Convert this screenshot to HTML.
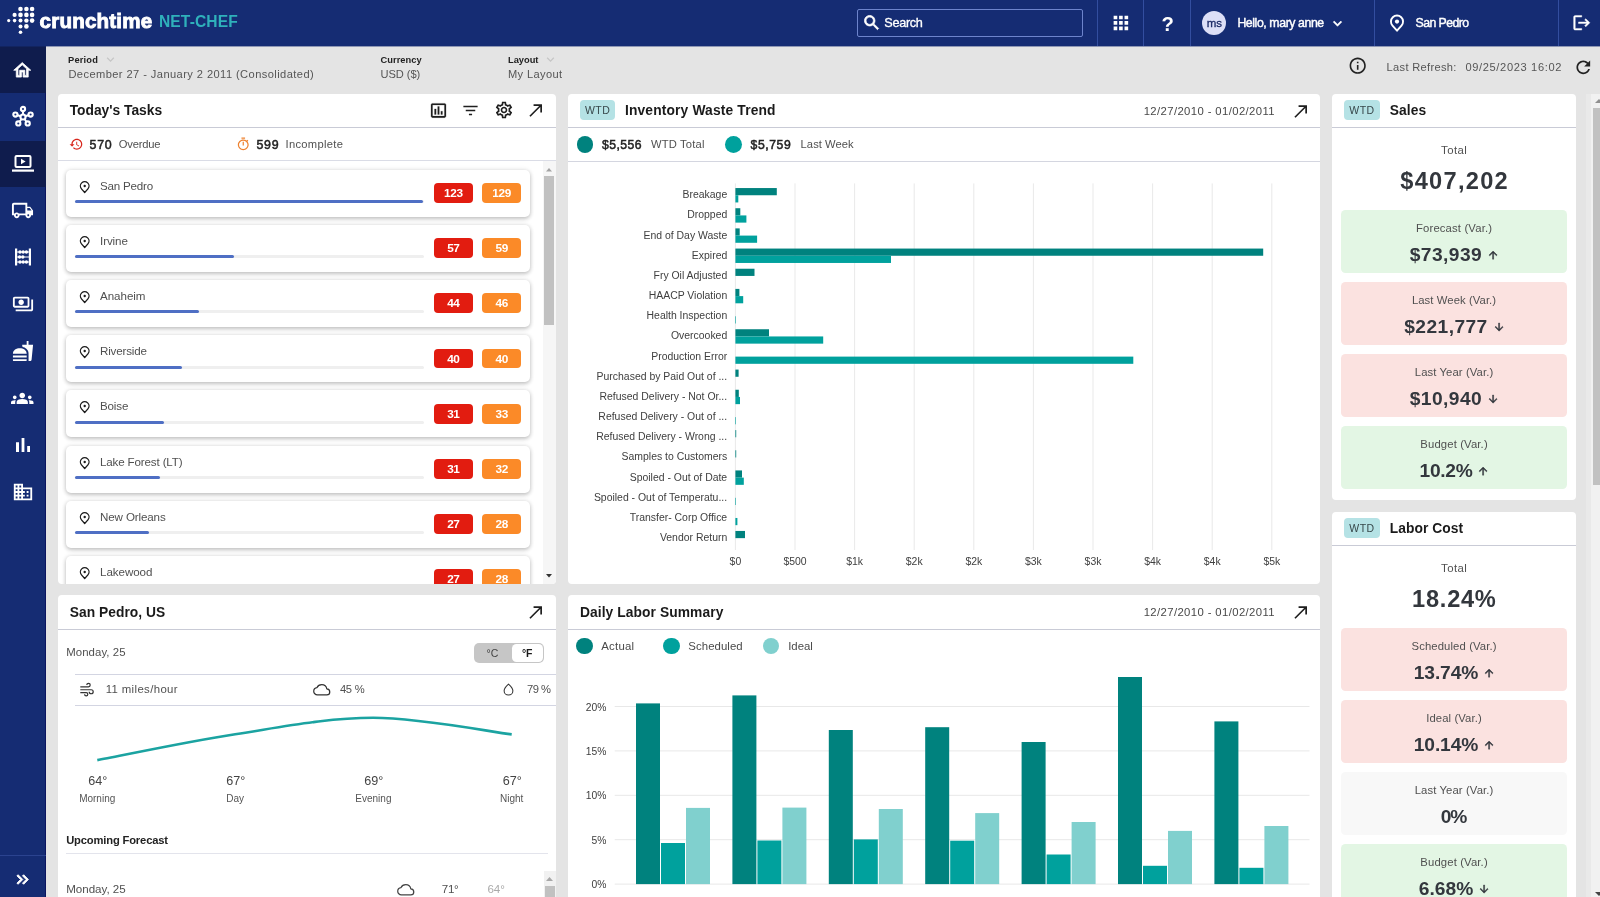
<!DOCTYPE html>
<html lang="en"><head><meta charset="utf-8"><title>CrunchTime Net-Chef</title>
<style>

*{box-sizing:border-box;margin:0;padding:0}
html,body{width:1600px;height:897px;overflow:hidden;background:#e4e4e4;font-family:"Liberation Sans",sans-serif;color:#222}
#app{position:absolute;left:0;top:0;width:1600px;height:897px;overflow:hidden;will-change:transform}
.abs{position:absolute}
.t{position:absolute;white-space:nowrap;line-height:1}
#topbar{position:absolute;left:0;top:0;width:1600px;height:46px;background:#152c73}
#side{position:absolute;left:0;top:46px;width:46px;height:851px;background:#152c73}
.sact{position:absolute;left:0;width:46px;height:47px;background:#0f1c4d}
.vsep{position:absolute;top:0;width:1px;height:46px;background:#334e9f}
.card{position:absolute;background:#fff;border-radius:4px;overflow:hidden}
.hline{position:absolute;left:0;right:0;height:1px;background:#c9cbd6}
.wtd{position:absolute;width:35.8px;height:19.6px;border-radius:4px;background:#b5e2e5}
.item{position:absolute;left:8px;width:464px;height:47px;background:#fff;border-radius:5px;box-shadow:0 2px 4px rgba(0,0,0,.2),0 0 5px rgba(0,0,0,.12)}
.bdg{position:absolute;top:13.4px;width:39.4px;height:19.8px;border-radius:4px;color:#fff;font-weight:bold;font-size:11.8px;line-height:20px;text-align:center;letter-spacing:-.35px;text-indent:-.3px}
.trk{position:absolute;left:8.5px;top:30.4px;width:349px;height:3px;border-radius:2px;background:#efefef}
.fil{position:absolute;left:8.5px;top:30.4px;height:3px;border-radius:2px;background:#4f6fc4}
svg{position:absolute;overflow:visible}

</style></head>
<body>
<div id="app">
<div id="topbar"></div><div id="side"></div>
<div class="abs" style="left:46px;top:46px;width:1554px;height:1px;background:#8e97b4"></div>
<div class="abs" style="left:45px;top:47px;width:1px;height:850px;background:#0b1560"></div>
<svg style="left:0;top:0" width="46" height="46"><circle cx="20.5" cy="9" r="2.3" fill="#fff"/><circle cx="26.4" cy="9" r="2.3" fill="#fff"/><circle cx="32.1" cy="9" r="2.3" fill="#fff"/><circle cx="14.6" cy="14.9" r="2.1" fill="#fff"/><circle cx="20.5" cy="14.9" r="2.3" fill="#fff"/><circle cx="26.4" cy="14.9" r="2.3" fill="#fff"/><circle cx="32.1" cy="14.9" r="2.3" fill="#fff"/><circle cx="8.7" cy="20.6" r="1.6" fill="#fff"/><circle cx="14.6" cy="20.6" r="1.8" fill="#fff"/><circle cx="20.5" cy="20.6" r="2.0" fill="#fff"/><circle cx="26.4" cy="20.6" r="2.2" fill="#fff"/><circle cx="32.1" cy="20.6" r="2.3" fill="#fff"/><circle cx="20.5" cy="26.4" r="2.0" fill="#fff"/><circle cx="26.4" cy="26.4" r="2.3" fill="#fff"/><circle cx="20.5" cy="32.3" r="1.8" fill="#fff"/></svg>
<div class="t" id="lg1" style="left:39.60px;top:11px;font-size:20.6px;color:#fff;letter-spacing:0.176px;font-weight:bold;-webkit-text-stroke:0.9px #fff;">crunchtime</div>
<div class="t" id="lg2" style="left:159.00px;top:14px;font-size:15.6px;color:#2fb1bb;letter-spacing:0.100px;font-weight:bold;">NET-CHEF</div>
<div class="abs" style="left:857px;top:9px;width:226px;height:28px;border:1px solid #6d84cc;border-radius:2px"></div>
<svg style="left:861.95px;top:12.75px" width="19.5" height="19.5" viewBox="0 0 24 24"><path fill="#fff" stroke="#fff" stroke-width="0.9" stroke-linejoin="round" fill-rule="evenodd" d="M15.5 14h-.79l-.28-.27C15.41 12.59 16 11.11 16 9.5 16 5.91 13.09 3 9.5 3S3 5.91 3 9.5 5.91 16 9.5 16c1.61 0 3.09-.59 4.23-1.57l.27.28v.79l5 4.99L20.49 19l-4.99-5zm-6 0C7.01 14 5 11.99 5 9.5S7.01 5 9.5 5 14 7.01 14 9.5 11.99 14 9.5 14z"/></svg>
<div class="t" id="srch" style="left:884.30px;top:17px;font-size:12.7px;color:#fff;letter-spacing:-0.324px;-webkit-text-stroke:0.3px #fff;">Search</div>
<div class="vsep" style="left:1097px"></div>
<div class="vsep" style="left:1143px"></div>
<div class="vsep" style="left:1190px"></div>
<div class="vsep" style="left:1374px"></div>
<div class="vsep" style="left:1558px"></div>
<svg style="left:1109.80px;top:12.20px" width="21.8" height="21.8" viewBox="0 0 24 24"><path fill="#fff" fill-rule="evenodd" d="M4 8h4V4H4v4zm6 12h4v-4h-4v4zm-6 0h4v-4H4v4zm0-6h4v-4H4v4zm6 0h4v-4h-4v4zm6-10v4h4V4h-4zm-6 4h4V4h-4v4zm6 6h4v-4h-4v4zm0 6h4v-4h-4v4z"/></svg>
<div class="t" style="left:1161.53px;top:14px;font-size:20.2px;color:#fff;font-weight:bold;">?</div>
<div class="abs" style="left:1202.3px;top:11.2px;width:24px;height:24px;border-radius:12px;background:#dcdff7"></div>
<div class="t" style="left:1206.63px;top:18px;font-size:11.5px;color:#1b2a66;-webkit-text-stroke:0.3px #1b2a66;">ms</div>
<div class="t" id="hello" style="left:1237.40px;top:17px;font-size:12.3px;color:#fff;letter-spacing:-0.411px;-webkit-text-stroke:0.4px #fff;">Hello, mary anne</div>
<svg style="left:1329.10px;top:14.90px" width="17" height="17" viewBox="0 0 24 24"><path fill="#fff" stroke="#fff" stroke-width="0.8" stroke-linejoin="round" fill-rule="evenodd" d="M16.59 8.59L12 13.17 7.41 8.59 6 10l6 6 6-6z"/></svg>
<svg style="left:0;top:0" width="1" height="1"><path d="M1397.00 30.68L1401.51 25.63A6.05 6.05 0 1 0 1392.49 25.63Z" fill="none" stroke="#fff" stroke-width="1.9" stroke-linejoin="round"/><circle cx="1397.00" cy="21.60" r="2.1" fill="#fff"/></svg>
<div class="t" id="sp" style="left:1415.50px;top:17px;font-size:12.3px;color:#fff;letter-spacing:-0.559px;-webkit-text-stroke:0.4px #fff;">San Pedro</div>
<svg style="left:1571.85px;top:13.45px" width="19.5" height="19.5" viewBox="0 0 24 24"><path fill="#fff" stroke="#fff" stroke-width="0.5" stroke-linejoin="round" fill-rule="evenodd" d="M17 7l-1.41 1.41L18.17 11H8v2h10.17l-2.58 2.58L17 17l5-5zM4 5h8V3H4c-1.1 0-2 .9-2 2v14c0 1.1.9 2 2 2h8v-2H4V5z"/></svg>
<div class="sact" style="top:47px;height:46px"></div><div class="sact" style="top:141px;height:46px"></div>
<div class="abs" style="left:0;top:46px;width:46px;height:1px;background:#12245f"></div>
<svg style="left:12.35px;top:59.75px" width="20.5" height="20.5" viewBox="0 0 24 24"><path fill="#fff" stroke="#fff" stroke-width="0.9" stroke-linejoin="round" fill-rule="evenodd" d="M12 5.69l5 4.5V18h-2v-6H9v6H7v-7.81l5-4.5M12 3L2 12h3v8h6v-6h2v6h6v-8h3L12 3z"/></svg>
<svg style="left:10.9px;top:105.2px" width="24" height="24" viewBox="0 0 24 24" fill="none" stroke="#fff" stroke-width="2"><line x1="12" y1="12" x2="12.00" y2="4.00"/><line x1="12" y1="12" x2="19.61" y2="9.53"/><line x1="12" y1="12" x2="16.70" y2="18.47"/><line x1="12" y1="12" x2="7.30" y2="18.47"/><line x1="12" y1="12" x2="4.39" y2="9.53"/><circle cx="12" cy="12" r="3.6" fill="#fff" stroke="none"/><circle cx="12" cy="12" r="1.5" fill="#162d78" stroke="none"/><circle cx="12.00" cy="4.00" r="2.1" fill="#162d78" stroke-width="2.1"/><circle cx="19.61" cy="9.53" r="2.1" fill="#162d78" stroke-width="2.1"/><circle cx="16.70" cy="18.47" r="2.1" fill="#162d78" stroke-width="2.1"/><circle cx="7.30" cy="18.47" r="2.1" fill="#162d78" stroke-width="2.1"/><circle cx="4.39" cy="9.53" r="2.1" fill="#162d78" stroke-width="2.1"/></svg>
<svg style="left:11px;top:152px" width="24" height="24" viewBox="0 0 24 24"><rect x="4.5" y="4" width="15" height="11" rx="1" fill="none" stroke="#fff" stroke-width="2"/><path d="M10 6.8v5.4l4.6-2.7z" fill="#fff"/><rect x="1" y="17.5" width="22" height="2.2" fill="#fff"/></svg>
<svg style="left:11.00px;top:198.50px" width="23" height="23" viewBox="0 0 24 24"><path fill="#fff" fill-rule="evenodd" d="M20 8h-3V4H3c-1.1 0-2 .9-2 2v11h2c0 1.66 1.34 3 3 3s3-1.34 3-3h6c0 1.66 1.34 3 3 3s3-1.34 3-3h2v-5l-3-4zm-.5 1.5l1.96 2.5H17V9.5h2.5zM6 18c-.55 0-1-.45-1-1s.45-1 1-1 1 .45 1 1-.45 1-1 1zm2.22-3c-.55-.61-1.33-1-2.22-1s-1.67.39-2.22 1H3V6h12v9H8.22zM18 18c-.55 0-1-.45-1-1s.45-1 1-1 1 .45 1 1-.45 1-1 1z"/></svg>
<svg style="left:11px;top:245px" width="24" height="24" viewBox="0 0 24 24" fill="#fff"><rect x="4" y="3.5" width="2.2" height="17"/><rect x="17.8" y="3.5" width="2.2" height="17"/><rect x="5" y="6.5" width="14" height="1"/><rect x="5" y="11.5" width="14" height="1"/><rect x="5" y="16.5" width="14" height="1"/><circle cx="9" cy="7" r="1.7"/><circle cx="12.2" cy="7" r="1.7"/><circle cx="15.4" cy="7" r="1.7"/><circle cx="8.6" cy="12" r="1.7"/><circle cx="11.8" cy="12" r="1.7"/><circle cx="9" cy="17" r="1.7"/><circle cx="12.2" cy="17" r="1.7"/><circle cx="15.4" cy="17" r="1.7"/></svg>
<svg style="left:11.50px;top:293.00px" width="22" height="22" viewBox="0 0 24 24"><path fill="#fff" fill-rule="evenodd" d="M19 14V6c0-1.1-.9-2-2-2H3c-1.1 0-2 .9-2 2v8c0 1.1.9 2 2 2h14c1.1 0 2-.9 2-2zm-2 0H3V6h14v8zm-7-7c-1.66 0-3 1.34-3 3s1.34 3 3 3 3-1.34 3-3-1.34-3-3-3zm13 0v11c0 1.1-.9 2-2 2H4v-2h17V7h2z"/></svg>
<svg style="left:11.50px;top:340.00px" width="22" height="22" viewBox="0 0 24 24"><path fill="#fff" fill-rule="evenodd" d="M18.06 22.99h1.66c.84 0 1.53-.64 1.63-1.46L23 5.05h-5V1h-1.97v4.05h-4.97l.3 2.34c1.71.47 3.31 1.32 4.27 2.26 1.44 1.42 2.43 2.89 2.43 5.29v8.05zM1 21.99V21h15.03v.99c0 .55-.45 1-1.01 1H2.01c-.56 0-1.01-.45-1.01-1zm15.03-7c0-8-15.03-8-15.03 0h15.03zM1.02 17h15v2h-15z"/></svg>
<svg style="left:11.45px;top:386.75px" width="22.5" height="22.5" viewBox="0 0 24 24"><path fill="#fff" fill-rule="evenodd" d="M12 12.75c1.63 0 3.07.39 4.24.9 1.08.48 1.76 1.56 1.76 2.73V18H6v-1.61c0-1.18.68-2.26 1.76-2.73 1.17-.52 2.61-.91 4.24-.91zM4 13c1.1 0 2-.9 2-2s-.9-2-2-2-2 .9-2 2 .9 2 2 2zm1.13 1.1c-.37-.06-.74-.1-1.13-.1-.99 0-1.93.21-2.78.58C.48 14.9 0 15.62 0 16.43V18h4.5v-1.61c0-.83.23-1.61.63-2.29zM20 13c1.1 0 2-.9 2-2s-.9-2-2-2-2 .9-2 2 .9 2 2 2zm4 3.43c0-.81-.48-1.53-1.22-1.85-.85-.37-1.79-.58-2.78-.58-.39 0-.76.04-1.13.1.4.68.63 1.46.63 2.29V18H24v-1.57zM12 6c1.66 0 3 1.34 3 3s-1.34 3-3 3-3-1.34-3-3 1.34-3 3-3z"/></svg>
<svg style="left:10.50px;top:433.00px" width="24" height="24" viewBox="0 0 24 24"><path fill="#fff" fill-rule="evenodd" d="M5 9.2h3V19H5zM10.6 5h2.8v14h-2.8zm5.6 8H19v6h-2.8z"/></svg>
<svg style="left:11.50px;top:481.00px" width="22" height="22" viewBox="0 0 24 24"><path fill="#fff" fill-rule="evenodd" d="M12 7V3H2v18h20V7H12zM6 19H4v-2h2v2zm0-4H4v-2h2v2zm0-4H4V9h2v2zm0-4H4V5h2v2zm4 12H8v-2h2v2zm0-4H8v-2h2v2zm0-4H8V9h2v2zm0-4H8V5h2v2zm10 12h-8v-2h2v-2h-2v-2h2v-2h-2V9h8v10zm-2-8h-2v2h2v-2zm0 4h-2v2h2v-2z"/></svg>
<div class="abs" style="left:0;top:855px;width:46px;height:1px;background:#2b438f"></div>
<svg style="left:12.50px;top:870.00px" width="19" height="19" viewBox="0 0 24 24"><path fill="#fff" stroke="#fff" stroke-width="1.2" stroke-linejoin="round" fill-rule="evenodd" d="M6.41 6L5 7.41 9.58 12 5 16.59 6.41 18l6-6z M13.41 6L12 7.41 16.58 12 12 16.59 13.410 18l6-6z"/></svg>
<div class="t" id="f1" style="left:68.10px;top:56px;font-size:9.3px;color:#222;letter-spacing:0.160px;font-weight:bold;">Period</div>
<svg style="left:103.10px;top:52.10px" width="15" height="15" viewBox="0 0 24 24"><path fill="#c6c6c6" fill-rule="evenodd" d="M16.59 8.59L12 13.17 7.41 8.59 6 10l6 6 6-6z"/></svg>
<div class="t" id="f2" style="left:68.40px;top:69px;font-size:11.1px;color:#555;letter-spacing:0.428px;">December 27 - January 2 2011 (Consolidated)</div>
<div class="t" id="f3" style="left:380.50px;top:56px;font-size:9.3px;color:#222;letter-spacing:0.046px;font-weight:bold;">Currency</div>
<div class="t" id="f4" style="left:380.50px;top:69px;font-size:11.1px;color:#555;letter-spacing:-0.041px;">USD ($)</div>
<div class="t" id="f5" style="left:508.00px;top:56px;font-size:9.3px;color:#222;letter-spacing:-0.014px;font-weight:bold;">Layout</div>
<svg style="left:543.40px;top:52.10px" width="15" height="15" viewBox="0 0 24 24"><path fill="#c6c6c6" fill-rule="evenodd" d="M16.59 8.59L12 13.17 7.41 8.59 6 10l6 6 6-6z"/></svg>
<div class="t" id="f6" style="left:508.00px;top:69px;font-size:11.1px;color:#555;letter-spacing:0.355px;">My Layout</div>
<svg style="left:1347.70px;top:56.20px" width="19.4" height="19.4" viewBox="0 0 24 24"><path fill="#222" fill-rule="evenodd" d="M11 7h2v2h-2zm0 4h2v6h-2zm1-9C6.48 2 2 6.48 2 12s4.48 10 10 10 10-4.48 10-10S17.52 2 12 2zm0 18c-4.41 0-8-3.59-8-8s3.59-8 8-8 8 3.59 8 8-3.59 8-8 8z"/></svg>
<div class="t" id="lr" style="left:1386.60px;top:62px;font-size:11.1px;color:#555;letter-spacing:0.314px;">Last Refresh:</div>
<div class="t" id="lr2" style="left:1465.40px;top:62px;font-size:11.1px;color:#555;letter-spacing:0.643px;">09/25/2023 16:02</div>
<svg style="left:1573.00px;top:56.70px" width="20.6" height="20.6" viewBox="0 0 24 24"><path fill="#222" fill-rule="evenodd" d="M17.65 6.35C16.2 4.9 14.21 4 12 4c-4.42 0-7.99 3.58-7.99 8s3.57 8 7.99 8c3.73 0 6.84-2.55 7.73-6h-2.08c-.82 2.33-3.04 4-5.65 4-3.31 0-6-2.69-6-6s2.69-6 6-6c1.66 0 3.14.69 4.22 1.78L13 11h7V4l-2.35 2.35z"/></svg>
<div class="abs" style="left:1586px;top:94px;width:5px;height:803px;background:#e9e9e9"></div>
<div class="abs" style="left:1591px;top:94px;width:9px;height:803px;background:#f1f1f1"></div>
<div class="abs" style="left:1592.5px;top:108.4px;width:7.5px;height:376.4px;background:#c1c1c1"></div>
<svg style="left:1594.5px;top:99px" width="5.5" height="4"><path d="M0 4L5.5 4L5.5 1.6L4 0z" fill="#8f8f8f"/></svg>
<svg style="left:1594.5px;top:891.5px" width="5.5" height="4"><path d="M0 0L5.5 0L5.5 2.4L4 4z" fill="#444"/></svg>
<div class="card" style="left:58px;top:94px;width:498px;height:490px">
<div class="t" id="tt" style="left:11.70px;top:10px;font-size:13.8px;color:#1a1a1a;letter-spacing:-0.009px;font-weight:bold;">Today's Tasks</div>
<svg style="left:371.00px;top:6.90px" width="19" height="19" viewBox="0 0 24 24"><path fill="#1f1f1f" stroke="#1f1f1f" stroke-width="0.3" stroke-linejoin="round" fill-rule="evenodd" d="M9 17H7v-7h2v7zm4 0h-2V7h2v10zm4 0h-2v-4h2v4zm2.5 2.1h-15V5h15v14.1zm0-16.1h-15c-1.1 0-2 .9-2 2v14c0 1.1.9 2 2 2h15c1.1 0 2-.9 2-2V5c0-1.1-.9-2-2-2z"/></svg>
<svg style="left:402.80px;top:7.00px" width="19" height="19" viewBox="0 0 24 24"><path fill="#1f1f1f" fill-rule="evenodd" d="M10 18h4v-2h-4v2zM3 6v2h18V6H3zm3 7h12v-2H6v2z"/></svg>
<svg style="left:435.60px;top:6.30px" width="20" height="20" viewBox="0 0 24 24"><path fill="#1f1f1f" fill-rule="evenodd" d="M19.43 12.98c.04-.32.07-.64.07-.98 0-.34-.03-.66-.07-.98l2.11-1.65c.19-.15.24-.42.12-.64l-2-3.46c-.09-.16-.26-.25-.44-.25-.06 0-.12.01-.17.03l-2.49 1c-.52-.4-1.08-.73-1.69-.98l-.38-2.65C14.46 2.18 14.25 2 14 2h-4c-.25 0-.46.18-.49.42l-.38 2.65c-.61.25-1.17.59-1.69.98l-2.49-1c-.06-.02-.12-.03-.18-.03-.17 0-.34.09-.43.25l-2 3.46c-.13.22-.07.49.12.64l2.11 1.65c-.04.32-.07.65-.07.98 0 .33.03.66.07.98l-2.11 1.65c-.19.15-.24.42-.12.64l2 3.46c.09.16.26.25.44.25.06 0 .12-.01.17-.03l2.49-1c.52.4 1.08.73 1.69.98l.38 2.65c.03.24.24.42.49.42h4c.25 0 .46-.18.49-.42l.38-2.65c.61-.25 1.17-.59 1.69-.98l2.49 1c.06.02.12.03.18.03.17 0 .34-.09.43-.25l2-3.46c.12-.22.07-.49-.12-.64l-2.11-1.65zm-1.98-1.71c.04.31.05.52.05.73 0 .21-.02.43-.05.73l-.14 1.13.89.7 1.08.84-.7 1.21-1.27-.51-1.04-.42-.9.68c-.43.32-.84.56-1.25.73l-1.06.43-.16 1.13-.2 1.35h-1.4l-.19-1.35-.16-1.13-1.06-.43c-.43-.18-.83-.41-1.23-.71l-.91-.7-1.06.43-1.27.51-.7-1.21 1.08-.84.89-.7-.14-1.13c-.03-.31-.05-.54-.05-.74s.02-.43.05-.73l.14-1.13-.89-.7-1.08-.84.7-1.21 1.27.51 1.04.42.9-.68c.43-.32.84-.56 1.25-.73l1.06-.43.16-1.13.2-1.35h1.39l.19 1.35.16 1.13 1.06.43c.43.18.83.41 1.23.71l.91.7 1.06-.43 1.27-.51.7 1.21-1.07.85-.89.7.14 1.13zM12 8c-2.21 0-4 1.79-4 4s1.79 4 4 4 4-1.79 4-4-1.79-4-4-4zm0 6c-1.1 0-2-.9-2-2s.9-2 2-2 2 .9 2 2-.9 2-2 2z"/></svg>
<svg style="left:467.80px;top:6.40px" width="20.2" height="20.2" viewBox="0 0 24 24"><path fill="#1f1f1f" fill-rule="evenodd" d="M9 5v2h6.59L4 18.59 5.41 20 17 8.41V15h2V5H9z"/></svg>
<div class="hline" style="top:33px"></div>
<svg style="left:10.95px;top:43.25px" width="14.5" height="14.5" viewBox="0 0 24 24"><path fill="#d8261c" fill-rule="evenodd" d="M13 3c-4.97 0-9 4.03-9 9H1l3.89 3.89.07.14L9 12H6c0-3.87 3.13-7 7-7s7 3.13 7 7-3.13 7-7 7c-1.93 0-3.68-.79-4.94-2.06l-1.42 1.42C8.27 19.99 10.51 21 13 21c4.97 0 9-4.03 9-9s-4.03-9-9-9zm-1 5v5l4.28 2.54.72-1.21-3.5-2.08V8H12z"/></svg>
<div class="t" style="left:31.60px;top:45px;font-size:12.4px;color:#222;letter-spacing:0.670px;-webkit-text-stroke:0.5px #222;">570</div>
<div class="t" style="left:60.80px;top:45px;font-size:11.2px;color:#505050;letter-spacing:-0.194px;">Overdue</div>
<svg style="left:178.05px;top:43.05px" width="14.5" height="14.5" viewBox="0 0 24 24"><path fill="#ee8230" fill-rule="evenodd" d="M15 1H9v2h6V1zm-4 13h2V8h-2v6zm8.03-6.61l1.42-1.42c-.43-.51-.9-.99-1.41-1.41l-1.42 1.42C16.07 4.74 14.12 4 12 4c-4.97 0-9 4.03-9 9s4.02 9 9 9 9-4.03 9-9c0-2.12-.74-4.07-1.97-5.61zM12 20c-3.87 0-7-3.13-7-7s3.13-7 7-7 7 3.13 7 7-3.13 7-7 7z"/></svg>
<div class="t" style="left:198.40px;top:45px;font-size:12.4px;color:#222;letter-spacing:0.770px;-webkit-text-stroke:0.5px #222;">599</div>
<div class="t" style="left:227.50px;top:45px;font-size:11.2px;color:#505050;letter-spacing:0.301px;">Incomplete</div>
<div class="hline" style="top:66px;background:#dadce6"></div>
<div class="item" style="top:75.6px">
<svg style="left:0;top:0" width="1" height="1"><path d="M18.70 22.51L21.93 18.84A4.30 4.30 0 1 0 15.47 18.84Z" fill="none" stroke="#1d1d1d" stroke-width="1.3" stroke-linejoin="round"/><circle cx="18.70" cy="16.00" r="1.2" fill="#1d1d1d"/></svg>
<div class="t" style="left:34.00px;top:10px;font-size:11.6px;color:#505050;letter-spacing:-0.202px;">San Pedro</div>
<div class="trk"></div>
<div class="fil" style="width:348.5px"></div>
<div class="bdg" style="left:367.8px;background:#e21c10">123</div>
<div class="bdg" style="left:416.1px;background:#fb8a28">129</div>
</div>
<div class="item" style="top:130.8px">
<svg style="left:0;top:0" width="1" height="1"><path d="M18.70 22.51L21.93 18.84A4.30 4.30 0 1 0 15.47 18.84Z" fill="none" stroke="#1d1d1d" stroke-width="1.3" stroke-linejoin="round"/><circle cx="18.70" cy="16.00" r="1.2" fill="#1d1d1d"/></svg>
<div class="t" style="left:34.00px;top:10px;font-size:11.6px;color:#505050;letter-spacing:-0.094px;">Irvine</div>
<div class="trk"></div>
<div class="fil" style="width:159.6px"></div>
<div class="bdg" style="left:367.8px;background:#e21c10">57</div>
<div class="bdg" style="left:416.1px;background:#fb8a28">59</div>
</div>
<div class="item" style="top:186.0px">
<svg style="left:0;top:0" width="1" height="1"><path d="M18.70 22.51L21.93 18.84A4.30 4.30 0 1 0 15.47 18.84Z" fill="none" stroke="#1d1d1d" stroke-width="1.3" stroke-linejoin="round"/><circle cx="18.70" cy="16.00" r="1.2" fill="#1d1d1d"/></svg>
<div class="t" style="left:34.00px;top:10px;font-size:11.6px;color:#505050;letter-spacing:-0.041px;">Anaheim</div>
<div class="trk"></div>
<div class="fil" style="width:124.6px"></div>
<div class="bdg" style="left:367.8px;background:#e21c10">44</div>
<div class="bdg" style="left:416.1px;background:#fb8a28">46</div>
</div>
<div class="item" style="top:241.2px">
<svg style="left:0;top:0" width="1" height="1"><path d="M18.70 22.51L21.93 18.84A4.30 4.30 0 1 0 15.47 18.84Z" fill="none" stroke="#1d1d1d" stroke-width="1.3" stroke-linejoin="round"/><circle cx="18.70" cy="16.00" r="1.2" fill="#1d1d1d"/></svg>
<div class="t" style="left:34.00px;top:10px;font-size:11.6px;color:#505050;letter-spacing:-0.172px;">Riverside</div>
<div class="trk"></div>
<div class="fil" style="width:107.7px"></div>
<div class="bdg" style="left:367.8px;background:#e21c10">40</div>
<div class="bdg" style="left:416.1px;background:#fb8a28">40</div>
</div>
<div class="item" style="top:296.4px">
<svg style="left:0;top:0" width="1" height="1"><path d="M18.70 22.51L21.93 18.84A4.30 4.30 0 1 0 15.47 18.84Z" fill="none" stroke="#1d1d1d" stroke-width="1.3" stroke-linejoin="round"/><circle cx="18.70" cy="16.00" r="1.2" fill="#1d1d1d"/></svg>
<div class="t" style="left:34.00px;top:10px;font-size:11.6px;color:#505050;letter-spacing:-0.164px;">Boise</div>
<div class="trk"></div>
<div class="fil" style="width:89.3px"></div>
<div class="bdg" style="left:367.8px;background:#e21c10">31</div>
<div class="bdg" style="left:416.1px;background:#fb8a28">33</div>
</div>
<div class="item" style="top:351.6px">
<svg style="left:0;top:0" width="1" height="1"><path d="M18.70 22.51L21.93 18.84A4.30 4.30 0 1 0 15.47 18.84Z" fill="none" stroke="#1d1d1d" stroke-width="1.3" stroke-linejoin="round"/><circle cx="18.70" cy="16.00" r="1.2" fill="#1d1d1d"/></svg>
<div class="t" style="left:34.00px;top:10px;font-size:11.6px;color:#505050;letter-spacing:-0.149px;">Lake Forest (LT)</div>
<div class="trk"></div>
<div class="fil" style="width:85.7px"></div>
<div class="bdg" style="left:367.8px;background:#e21c10">31</div>
<div class="bdg" style="left:416.1px;background:#fb8a28">32</div>
</div>
<div class="item" style="top:406.8px">
<svg style="left:0;top:0" width="1" height="1"><path d="M18.70 22.51L21.93 18.84A4.30 4.30 0 1 0 15.47 18.84Z" fill="none" stroke="#1d1d1d" stroke-width="1.3" stroke-linejoin="round"/><circle cx="18.70" cy="16.00" r="1.2" fill="#1d1d1d"/></svg>
<div class="t" style="left:34.00px;top:10px;font-size:11.6px;color:#505050;letter-spacing:-0.132px;">New Orleans</div>
<div class="trk"></div>
<div class="fil" style="width:74.9px"></div>
<div class="bdg" style="left:367.8px;background:#e21c10">27</div>
<div class="bdg" style="left:416.1px;background:#fb8a28">28</div>
</div>
<div class="item" style="top:462.0px">
<svg style="left:0;top:0" width="1" height="1"><path d="M18.70 22.51L21.93 18.84A4.30 4.30 0 1 0 15.47 18.84Z" fill="none" stroke="#1d1d1d" stroke-width="1.3" stroke-linejoin="round"/><circle cx="18.70" cy="16.00" r="1.2" fill="#1d1d1d"/></svg>
<div class="t" style="left:34.00px;top:10px;font-size:11.6px;color:#505050;letter-spacing:-0.061px;">Lakewood</div>
<div class="trk"></div>
<div class="fil" style="width:74.9px"></div>
<div class="bdg" style="left:367.8px;background:#e21c10">27</div>
<div class="bdg" style="left:416.1px;background:#fb8a28">28</div>
</div>
<div class="abs" style="left:484.5px;top:67px;width:13.5px;height:423px;background:#f6f6f6"></div>
<div class="abs" style="left:486px;top:81.6px;width:10px;height:149px;background:#c1c1c1"></div>
<svg style="left:488.20000000000005px;top:73.80000000000001px" width="6" height="3.4"><path d="M0 3.4L3 0L6 3.4z" fill="#a3a3a3"/></svg>
<svg style="left:488.20000000000005px;top:480px" width="6" height="3.4"><path d="M0 0L3 3.4L6 0z" fill="#333"/></svg>
</div>
<div class="card" style="left:568px;top:94px;width:752px;height:490px">
<div class="wtd" style="left:11.7px;top:6.2px"></div>
<div class="t" style="left:17.00px;top:11px;font-size:10.5px;color:#37474a;letter-spacing:0.464px;">WTD</div>
<div class="t" id="iwt" style="left:56.90px;top:10px;font-size:13.8px;color:#1a1a1a;letter-spacing:0.158px;font-weight:bold;">Inventory Waste Trend</div>
<div class="t" id="d1" style="left:575.70px;top:12px;font-size:11.3px;color:#484848;letter-spacing:0.391px;">12/27/2010 - 01/02/2011</div>
<svg style="left:722.90px;top:6.50px" width="20.2" height="20.2" viewBox="0 0 24 24"><path fill="#1f1f1f" fill-rule="evenodd" d="M9 5v2h6.59L4 18.59 5.41 20 17 8.41V15h2V5H9z"/></svg>
<div class="hline" style="top:33px"></div>
<div class="abs" style="left:8.5px;top:42.3px;width:16.6px;height:16.6px;border-radius:9px;background:#00827e"></div>
<div class="t" style="left:33.90px;top:45px;font-size:12.2px;color:#222;letter-spacing:0.497px;-webkit-text-stroke:0.5px #222;">$5,556</div>
<div class="t" style="left:83.00px;top:45px;font-size:11.2px;color:#505050;letter-spacing:0.170px;">WTD Total</div>
<div class="abs" style="left:157.1px;top:42.3px;width:16.6px;height:16.6px;border-radius:9px;background:#00a19d"></div>
<div class="t" style="left:182.60px;top:45px;font-size:12.2px;color:#222;letter-spacing:0.564px;-webkit-text-stroke:0.5px #222;">$5,759</div>
<div class="t" style="left:232.60px;top:45px;font-size:11.2px;color:#505050;letter-spacing:0.044px;">Last Week</div>
<div class="hline" style="top:66.5px;background:#d4d6e0"></div>
<svg style="left:0;top:0" width="752" height="490"><rect x="166.90" y="89.40" width="1" height="366.60" fill="#e9e9e9"/><rect x="226.50" y="89.40" width="1" height="366.60" fill="#e9e9e9"/><rect x="286.10" y="89.40" width="1" height="366.60" fill="#e9e9e9"/><rect x="345.70" y="89.40" width="1" height="366.60" fill="#e9e9e9"/><rect x="405.30" y="89.40" width="1" height="366.60" fill="#e9e9e9"/><rect x="464.90" y="89.40" width="1" height="366.60" fill="#e9e9e9"/><rect x="524.50" y="89.40" width="1" height="366.60" fill="#e9e9e9"/><rect x="584.10" y="89.40" width="1" height="366.60" fill="#e9e9e9"/><rect x="643.70" y="89.40" width="1" height="366.60" fill="#e9e9e9"/><rect x="703.30" y="89.40" width="1" height="366.60" fill="#e9e9e9"/><rect x="167.40" y="94.05" width="41.40" height="7.2" fill="#00827e"/><rect x="167.40" y="101.25" width="2.90" height="7.2" fill="#00a19d"/><rect x="167.40" y="114.22" width="4.90" height="7.2" fill="#00827e"/><rect x="167.40" y="121.42" width="11.00" height="7.2" fill="#00a19d"/><rect x="167.40" y="134.39" width="4.30" height="7.2" fill="#00827e"/><rect x="167.40" y="141.59" width="21.70" height="7.2" fill="#00a19d"/><rect x="167.40" y="154.56" width="527.80" height="7.2" fill="#00827e"/><rect x="167.40" y="161.76" width="155.60" height="7.2" fill="#00a19d"/><rect x="167.40" y="174.73" width="19.10" height="7.2" fill="#00827e"/><rect x="167.40" y="194.90" width="4.00" height="7.2" fill="#00827e"/><rect x="167.40" y="202.10" width="7.80" height="7.2" fill="#00a19d"/><rect x="167.40" y="222.27" width="0.60" height="7.2" fill="#00a19d"/><rect x="167.40" y="235.24" width="33.60" height="7.2" fill="#00827e"/><rect x="167.40" y="242.44" width="87.80" height="7.2" fill="#00a19d"/><rect x="167.40" y="262.61" width="397.90" height="7.2" fill="#00a19d"/><rect x="167.40" y="275.58" width="3.20" height="7.2" fill="#00827e"/><rect x="167.40" y="295.75" width="3.40" height="7.2" fill="#00827e"/><rect x="167.40" y="302.95" width="4.60" height="7.2" fill="#00a19d"/><rect x="167.40" y="323.12" width="0.60" height="7.2" fill="#00a19d"/><rect x="167.40" y="336.09" width="0.80" height="7.2" fill="#00827e"/><rect x="167.40" y="356.26" width="0.80" height="7.2" fill="#00827e"/><rect x="167.40" y="376.43" width="6.60" height="7.2" fill="#00827e"/><rect x="167.40" y="383.63" width="8.40" height="7.2" fill="#00a19d"/><rect x="167.40" y="403.80" width="0.60" height="7.2" fill="#00a19d"/><rect x="167.40" y="423.97" width="2.00" height="7.2" fill="#00a19d"/><rect x="167.40" y="436.94" width="9.60" height="7.2" fill="#00827e"/></svg>
<div class="t" style="left:114.56px;top:96px;font-size:10.45px;color:#404040;">Breakage</div>
<div class="t" style="left:119.21px;top:116px;font-size:10.45px;color:#404040;">Dropped</div>
<div class="t" style="left:75.47px;top:137px;font-size:10.45px;color:#404040;">End of Day Waste</div>
<div class="t" style="left:123.87px;top:157px;font-size:10.45px;color:#404040;">Expired</div>
<div class="t" style="left:85.54px;top:177px;font-size:10.45px;color:#404040;">Fry Oil Adjusted</div>
<div class="t" style="left:80.68px;top:197px;font-size:10.45px;color:#404040;">HAACP Violation</div>
<div class="t" style="left:78.55px;top:217px;font-size:10.45px;color:#404040;">Health Inspection</div>
<div class="t" style="left:102.96px;top:237px;font-size:10.45px;color:#404040;">Overcooked</div>
<div class="t" style="left:83.21px;top:258px;font-size:10.45px;color:#404040;">Production Error</div>
<div class="t" style="left:28.60px;top:278px;font-size:10.45px;color:#404040;">Purchased by Paid Out of ...</div>
<div class="t" style="left:31.54px;top:298px;font-size:10.45px;color:#404040;">Refused Delivery - Not Or...</div>
<div class="t" style="left:30.37px;top:318px;font-size:10.45px;color:#404040;">Refused Delivery - Out of ...</div>
<div class="t" style="left:28.24px;top:338px;font-size:10.45px;color:#404040;">Refused Delivery - Wrong ...</div>
<div class="t" style="left:53.60px;top:358px;font-size:10.45px;color:#404040;">Samples to Customers</div>
<div class="t" style="left:61.71px;top:379px;font-size:10.45px;color:#404040;">Spoiled - Out of Date</div>
<div class="t" style="left:25.89px;top:399px;font-size:10.45px;color:#404040;">Spoiled - Out of Temperatu...</div>
<div class="t" style="left:61.74px;top:419px;font-size:10.45px;color:#404040;">Transfer- Corp Office</div>
<div class="t" style="left:91.91px;top:439px;font-size:10.45px;color:#404040;">Vendor Return</div>
<div class="t" style="left:161.59px;top:463px;font-size:10.45px;color:#404040;">$0</div>
<div class="t" style="left:215.38px;top:463px;font-size:10.45px;color:#404040;">$500</div>
<div class="t" style="left:278.18px;top:463px;font-size:10.45px;color:#404040;">$1k</div>
<div class="t" style="left:337.78px;top:463px;font-size:10.45px;color:#404040;">$2k</div>
<div class="t" style="left:397.38px;top:463px;font-size:10.45px;color:#404040;">$2k</div>
<div class="t" style="left:456.98px;top:463px;font-size:10.45px;color:#404040;">$3k</div>
<div class="t" style="left:516.58px;top:463px;font-size:10.45px;color:#404040;">$3k</div>
<div class="t" style="left:576.18px;top:463px;font-size:10.45px;color:#404040;">$4k</div>
<div class="t" style="left:635.78px;top:463px;font-size:10.45px;color:#404040;">$4k</div>
<div class="t" style="left:695.38px;top:463px;font-size:10.45px;color:#404040;">$5k</div>
</div>
<div class="card" style="left:58px;top:595px;width:498px;height:321px">
<div class="t" id="spu" style="left:11.70px;top:11px;font-size:13.8px;color:#1a1a1a;letter-spacing:0.039px;font-weight:bold;">San Pedro, US</div>
<svg style="left:468.10px;top:7.30px" width="20.2" height="20.2" viewBox="0 0 24 24"><path fill="#1f1f1f" fill-rule="evenodd" d="M9 5v2h6.59L4 18.59 5.41 20 17 8.41V15h2V5H9z"/></svg>
<div class="hline" style="top:34px"></div>
<div class="t" style="left:8.20px;top:52px;font-size:11.4px;color:#505050;letter-spacing:0.077px;">Monday, 25</div>
<div class="abs" style="left:416.0px;top:48.0px;width:70.1px;height:19.8px;border-radius:5px;background:#c6c6c6"></div>
<div class="abs" style="left:453.8px;top:48.7px;width:31.4px;height:18.2px;border-radius:4.5px;background:#fff"></div>
<div class="t" style="left:428.61px;top:53px;font-size:10.5px;color:#444;">°C</div>
<div class="t" style="left:463.89px;top:53px;font-size:10.5px;color:#1a1a1a;font-weight:bold;">°F</div>
<div class="hline" style="top:79px;left:16.5px;background:#d3d5e2"></div>
<svg style="left:-58px;top:-595px" width="1" height="1"><path d="M80.3 686.8H88.5a1.7 1.7 0 1 0 -1.7 -1.7M80.3 689.75H91.2a2 2 0 1 1 -2 2M80.3 692.7H86.2a1.6 1.6 0 1 1 -1.6 1.6" fill="none" stroke="#333" stroke-width="1.2"/></svg>
<div class="t" style="left:47.70px;top:89px;font-size:11.4px;color:#505050;letter-spacing:0.362px;">11 miles/hour</div>
<svg style="left:254.85px;top:85.75px" width="17.5" height="17.5" viewBox="0 0 24 24"><path fill="none" stroke="#333" stroke-width="1.7" stroke-linejoin="round" d="M6 19C3.24 19 1 16.76 1 14C1 11.4 3 9.27 5.55 9.04C6.6 6.64 9.1 5 12 5C15.5 5 18.4 7.5 18.9 10.8C21.2 11 23 12.8 23 15C23 17.2 21.2 19 19 19Z"/></svg>
<div class="t" style="left:281.90px;top:89px;font-size:11.2px;color:#505050;letter-spacing:-0.257px;">45 %</div>
<svg style="left:442.50px;top:86.70px" width="15" height="15" viewBox="0 0 24 24"><path fill="none" stroke="#333" stroke-width="1.7" stroke-linejoin="round" d="M12 3.3C8 7 5 10.6 5 13.9a7 7 0 0 0 14 0C19 10.6 16 7 12 3.3Z"/></svg>
<div class="t" style="left:468.90px;top:89px;font-size:11.2px;color:#505050;letter-spacing:-0.482px;">79 %</div>
<div class="hline" style="top:110px;left:16.5px;background:#d3d5e2"></div>
<svg style="left:0;top:0" width="498" height="320"><path d="M39.3 165.1 C62.3 160.8 131.2 146.2 177.2 139.2 C223.2 132.2 269.1 122.8 315.2 122.8 C361.3 122.8 430.6 136.6 453.7 139.4" fill="none" stroke="#1ba3a1" stroke-width="2.6"/></svg>
<div class="t" style="left:30.17px;top:180px;font-size:12.6px;color:#444;">64°</div>
<div class="t" style="left:21.14px;top:199px;font-size:10px;color:#555;">Morning</div>
<div class="t" style="left:168.17px;top:180px;font-size:12.6px;color:#444;">67°</div>
<div class="t" style="left:168.31px;top:199px;font-size:10px;color:#555;">Day</div>
<div class="t" style="left:306.37px;top:180px;font-size:12.6px;color:#444;">69°</div>
<div class="t" style="left:297.33px;top:199px;font-size:10px;color:#555;">Evening</div>
<div class="t" style="left:444.67px;top:180px;font-size:12.6px;color:#444;">67°</div>
<div class="t" style="left:442.03px;top:199px;font-size:10px;color:#555;">Night</div>
<div class="t" style="left:8.20px;top:240px;font-size:11.2px;color:#222;letter-spacing:-0.162px;font-weight:bold;">Upcoming Forecast</div>
<div class="hline" style="top:258.2px;left:8px;right:8px;background:#e3e4ec"></div>
<div class="t" style="left:8.20px;top:288px;font-size:11.6px;color:#505050;letter-spacing:-0.026px;">Monday, 25</div>
<svg style="left:338.55px;top:285.75px" width="17.5" height="17.5" viewBox="0 0 24 24"><path fill="none" stroke="#444" stroke-width="1.7" stroke-linejoin="round" d="M6 19C3.24 19 1 16.76 1 14C1 11.4 3 9.27 5.55 9.04C6.6 6.64 9.1 5 12 5C15.5 5 18.4 7.5 18.9 10.8C21.2 11 23 12.8 23 15C23 17.2 21.2 19 19 19Z"/></svg>
<div class="t" style="left:383.70px;top:288px;font-size:11.6px;color:#505050;letter-spacing:-0.247px;">71°</div>
<div class="t" style="left:429.60px;top:288px;font-size:11.6px;color:#aaa;letter-spacing:-0.181px;">64°</div>
<div class="abs" style="left:485.5px;top:276px;width:12.5px;height:40px;background:#f1f1f1"></div>
<div class="abs" style="left:486.5px;top:290.79999999999995px;width:10px;height:20px;background:#c1c1c1"></div>
<svg style="left:488px;top:282px" width="7" height="4"><path d="M0 4L3.5 0L7 4z" fill="#a8a8a8"/></svg>
</div>
<div class="card" style="left:568px;top:595px;width:752px;height:321px">
<div class="t" id="dls" style="left:11.90px;top:11px;font-size:13.8px;color:#1a1a1a;letter-spacing:0.090px;font-weight:bold;">Daily Labor Summary</div>
<div class="t" style="left:575.70px;top:12px;font-size:11.3px;color:#484848;letter-spacing:0.391px;">12/27/2010 - 01/02/2011</div>
<svg style="left:722.90px;top:7.30px" width="20.2" height="20.2" viewBox="0 0 24 24"><path fill="#1f1f1f" fill-rule="evenodd" d="M9 5v2h6.59L4 18.59 5.41 20 17 8.41V15h2V5H9z"/></svg>
<div class="hline" style="top:34px"></div>
<div class="abs" style="left:8.4px;top:42.5px;width:16.6px;height:16.6px;border-radius:9px;background:#00827e"></div>
<div class="t" style="left:33.20px;top:46px;font-size:11.4px;color:#4a4a4a;letter-spacing:0.253px;">Actual</div>
<div class="abs" style="left:95.2px;top:42.5px;width:16.6px;height:16.6px;border-radius:9px;background:#00a19d"></div>
<div class="t" style="left:120.30px;top:46px;font-size:11.4px;color:#4a4a4a;letter-spacing:0.069px;">Scheduled</div>
<div class="abs" style="left:194.7px;top:42.5px;width:16.6px;height:16.6px;border-radius:9px;background:#80d0ce"></div>
<div class="t" style="left:220.20px;top:46px;font-size:11.4px;color:#4a4a4a;letter-spacing:-0.024px;">Ideal</div>
<svg style="left:0;top:0" width="752" height="320"><rect x="46.7" y="288.60" width="694.8" height="1" fill="#e8e8e8"/><rect x="46.7" y="244.20" width="694.8" height="1" fill="#e8e8e8"/><rect x="46.7" y="199.80" width="694.8" height="1" fill="#e8e8e8"/><rect x="46.7" y="155.40" width="694.8" height="1" fill="#e8e8e8"/><rect x="46.7" y="111.00" width="694.8" height="1" fill="#e8e8e8"/><rect x="68.00" y="108.40" width="24" height="180.70" fill="#00827e"/><rect x="93.00" y="248.00" width="24" height="41.10" fill="#00a19d"/><rect x="118.00" y="212.90" width="24" height="76.20" fill="#80d0ce"/><rect x="164.40" y="100.40" width="24" height="188.70" fill="#00827e"/><rect x="189.40" y="245.50" width="24" height="43.60" fill="#00a19d"/><rect x="214.40" y="212.60" width="24" height="76.50" fill="#80d0ce"/><rect x="260.80" y="135.00" width="24" height="154.10" fill="#00827e"/><rect x="285.80" y="244.40" width="24" height="44.70" fill="#00a19d"/><rect x="310.80" y="214.00" width="24" height="75.10" fill="#80d0ce"/><rect x="357.20" y="132.20" width="24" height="156.90" fill="#00827e"/><rect x="382.20" y="245.70" width="24" height="43.40" fill="#00a19d"/><rect x="407.20" y="218.10" width="24" height="71.00" fill="#80d0ce"/><rect x="453.60" y="147.00" width="24" height="142.10" fill="#00827e"/><rect x="478.60" y="259.50" width="24" height="29.60" fill="#00a19d"/><rect x="503.60" y="227.00" width="24" height="62.10" fill="#80d0ce"/><rect x="550.00" y="82.00" width="24" height="207.10" fill="#00827e"/><rect x="575.00" y="270.80" width="24" height="18.30" fill="#00a19d"/><rect x="600.00" y="235.90" width="24" height="53.20" fill="#80d0ce"/><rect x="646.40" y="126.40" width="24" height="162.70" fill="#00827e"/><rect x="671.40" y="272.80" width="24" height="16.30" fill="#00a19d"/><rect x="696.40" y="231.00" width="24" height="58.10" fill="#80d0ce"/></svg>
<div class="t" style="left:23.51px;top:285px;font-size:10.3px;color:#3c3c3c;">0%</div>
<div class="t" style="left:23.51px;top:241px;font-size:10.3px;color:#3c3c3c;">5%</div>
<div class="t" style="left:17.78px;top:196px;font-size:10.3px;color:#3c3c3c;">10%</div>
<div class="t" style="left:17.78px;top:152px;font-size:10.3px;color:#3c3c3c;">15%</div>
<div class="t" style="left:17.78px;top:108px;font-size:10.3px;color:#3c3c3c;">20%</div>
</div>
<div class="card" style="left:1332px;top:94px;width:244px;height:405.6px">
<div class="wtd" style="left:12px;top:6.3px"></div>
<div class="t" style="left:17.30px;top:11px;font-size:10.5px;color:#37474a;letter-spacing:0.464px;">WTD</div>
<div class="t" style="left:57.70px;top:10px;font-size:13.8px;color:#1a1a1a;letter-spacing:0.087px;font-weight:bold;">Sales</div>
<div class="hline" style="top:33px"></div>
<div class="t" style="left:109.11px;top:51px;font-size:11.4px;color:#505050;letter-spacing:0.424px;">Total</div>
<div class="t" style="left:68.29px;top:76px;font-size:23.6px;color:#33373d;letter-spacing:1.283px;font-weight:bold;">$407,202</div>
<div class="abs" style="left:8.9px;top:115.7px;width:226.3px;height:63.2px;border-radius:4.5px;background:#e3f6e4"></div>
<div class="t" style="left:83.98px;top:129px;font-size:11.3px;color:#505050;letter-spacing:0.154px;">Forecast (Var.)</div>
<div class="t" style="left:77.75px;top:151px;font-size:19.2px;color:#33373d;letter-spacing:0.442px;font-weight:bold;">$73,939</div>
<svg style="left:155.25px;top:154.60px" width="12.2" height="12.2" viewBox="0 0 24 24"><path fill="#33373d" stroke="#33373d" stroke-width="1.0" stroke-linejoin="round" fill-rule="evenodd" d="M4 12l1.41 1.41L11 7.83V20h2V7.83l5.58 5.59L20 12l-8-8-8 8z"/></svg>
<div class="abs" style="left:8.9px;top:187.8px;width:226.3px;height:63.2px;border-radius:4.5px;background:#fbe2e0"></div>
<div class="t" style="left:79.89px;top:201px;font-size:11.3px;color:#505050;letter-spacing:0.075px;">Last Week (Var.)</div>
<div class="t" style="left:72.25px;top:223px;font-size:19.2px;color:#33373d;letter-spacing:0.427px;font-weight:bold;">$221,777</div>
<svg style="left:160.75px;top:226.65px" width="12.2" height="12.2" viewBox="0 0 24 24"><path fill="#33373d" stroke="#33373d" stroke-width="1.0" stroke-linejoin="round" fill-rule="evenodd" d="M20 12l-1.41-1.41L13 16.17V4h-2v12.170l-5.58-5.59L4 12l8 8 8-8z"/></svg>
<div class="abs" style="left:8.9px;top:259.8px;width:226.3px;height:63.2px;border-radius:4.5px;background:#fbe2e0"></div>
<div class="t" style="left:82.75px;top:273px;font-size:11.3px;color:#505050;letter-spacing:0.096px;">Last Year (Var.)</div>
<div class="t" style="left:77.75px;top:295px;font-size:19.2px;color:#33373d;letter-spacing:0.442px;font-weight:bold;">$10,940</div>
<svg style="left:155.25px;top:298.70px" width="12.2" height="12.2" viewBox="0 0 24 24"><path fill="#33373d" stroke="#33373d" stroke-width="1.0" stroke-linejoin="round" fill-rule="evenodd" d="M20 12l-1.41-1.41L13 16.17V4h-2v12.170l-5.58-5.59L4 12l8 8 8-8z"/></svg>
<div class="abs" style="left:8.9px;top:331.8px;width:226.3px;height:63.2px;border-radius:4.5px;background:#e3f6e4"></div>
<div class="t" style="left:88.32px;top:345px;font-size:11.3px;color:#505050;letter-spacing:0.135px;">Budget (Var.)</div>
<div class="t" style="left:87.60px;top:367px;font-size:19.2px;color:#33373d;letter-spacing:-0.328px;font-weight:bold;">10.2%</div>
<svg style="left:145.40px;top:370.75px" width="12.2" height="12.2" viewBox="0 0 24 24"><path fill="#33373d" stroke="#33373d" stroke-width="1.0" stroke-linejoin="round" fill-rule="evenodd" d="M4 12l1.41 1.41L11 7.83V20h2V7.83l5.58 5.59L20 12l-8-8-8 8z"/></svg>
</div>
<div class="card" style="left:1332px;top:512px;width:244px;height:420px">
<div class="wtd" style="left:12px;top:6.3px"></div>
<div class="t" style="left:17.30px;top:11px;font-size:10.5px;color:#37474a;letter-spacing:0.464px;">WTD</div>
<div class="t" style="left:57.70px;top:10px;font-size:13.8px;color:#1a1a1a;letter-spacing:0.066px;font-weight:bold;">Labor Cost</div>
<div class="hline" style="top:33px"></div>
<div class="t" style="left:109.11px;top:51px;font-size:11.4px;color:#505050;letter-spacing:0.424px;">Total</div>
<div class="t" style="left:80.12px;top:76px;font-size:23.6px;color:#33373d;letter-spacing:0.743px;font-weight:bold;">18.24%</div>
<div class="abs" style="left:8.9px;top:115.7px;width:226.3px;height:63.2px;border-radius:4.5px;background:#fbe2e0"></div>
<div class="t" style="left:79.51px;top:129px;font-size:11.3px;color:#505050;letter-spacing:0.110px;">Scheduled (Var.)</div>
<div class="t" style="left:81.75px;top:151px;font-size:19.2px;color:#33373d;letter-spacing:-0.103px;font-weight:bold;">13.74%</div>
<svg style="left:151.25px;top:154.60px" width="12.2" height="12.2" viewBox="0 0 24 24"><path fill="#33373d" stroke="#33373d" stroke-width="1.0" stroke-linejoin="round" fill-rule="evenodd" d="M4 12l1.41 1.41L11 7.83V20h2V7.83l5.58 5.59L20 12l-8-8-8 8z"/></svg>
<div class="abs" style="left:8.9px;top:187.8px;width:226.3px;height:63.2px;border-radius:4.5px;background:#fbe2e0"></div>
<div class="t" style="left:94.25px;top:201px;font-size:11.3px;color:#505050;letter-spacing:0.097px;">Ideal (Var.)</div>
<div class="t" style="left:81.75px;top:223px;font-size:19.2px;color:#33373d;letter-spacing:-0.103px;font-weight:bold;">10.14%</div>
<svg style="left:151.25px;top:226.65px" width="12.2" height="12.2" viewBox="0 0 24 24"><path fill="#33373d" stroke="#33373d" stroke-width="1.0" stroke-linejoin="round" fill-rule="evenodd" d="M4 12l1.41 1.41L11 7.83V20h2V7.83l5.58 5.59L20 12l-8-8-8 8z"/></svg>
<div class="abs" style="left:8.9px;top:259.8px;width:226.3px;height:63.2px;border-radius:4.5px;background:#f8f8f8"></div>
<div class="t" style="left:82.65px;top:273px;font-size:11.3px;color:#505050;letter-spacing:0.109px;">Last Year (Var.)</div>
<div class="t" style="left:108.76px;top:295px;font-size:19.2px;color:#33373d;letter-spacing:-1.275px;font-weight:bold;">0%</div>
<div class="abs" style="left:8.9px;top:331.8px;width:226.3px;height:63.2px;border-radius:4.5px;background:#e3f6e4"></div>
<div class="t" style="left:88.32px;top:345px;font-size:11.3px;color:#505050;letter-spacing:0.135px;">Budget (Var.)</div>
<div class="t" style="left:86.70px;top:367px;font-size:19.2px;color:#33373d;letter-spacing:0.032px;font-weight:bold;">6.68%</div>
<svg style="left:146.30px;top:370.75px" width="12.2" height="12.2" viewBox="0 0 24 24"><path fill="#33373d" stroke="#33373d" stroke-width="1.0" stroke-linejoin="round" fill-rule="evenodd" d="M20 12l-1.41-1.41L13 16.17V4h-2v12.170l-5.58-5.59L4 12l8 8 8-8z"/></svg>
</div>
</div>
</body></html>
